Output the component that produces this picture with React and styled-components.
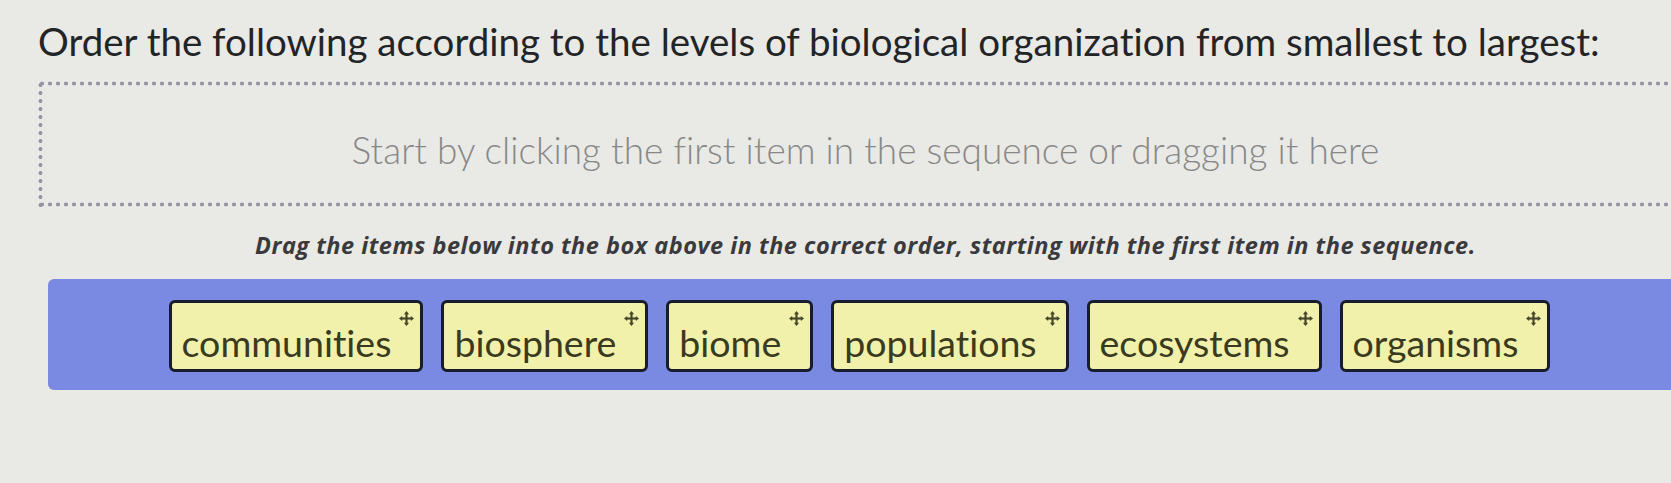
import React from 'react';
import styled, { createGlobalStyle } from 'styled-components';

const GlobalStyle = createGlobalStyle`
  html, body {
    margin: 0;
    padding: 0;
    background: #e9e9e6;
    overflow: hidden;
  }
  * {
    font-variant-ligatures: none;
  }
`;

const Page = styled.div`
  width: 1671px;
  height: 483px;
  padding: 15px 0 0 38px;
  box-sizing: border-box;
  font-family: 'Lato', 'Noto Sans', sans-serif;
  color: #262626;
`;

const Title = styled.h1`
  margin: 0;
  font-size: 38.5px;
  font-weight: 400;
  line-height: 52px;
  color: #222426;
  white-space: nowrap;
`;

const DropZone = styled.div`
  margin-top: 14px;
  margin-right: -22px;
  height: 126px;
  padding-top: 10px;
  box-sizing: border-box;
  display: flex;
  align-items: center;
  justify-content: center;
  background-image:
    radial-gradient(circle, #9494a6 1.7px, transparent 2.2px),
    radial-gradient(circle, #9494a6 1.7px, transparent 2.2px),
    radial-gradient(circle, #9494a6 1.7px, transparent 2.2px);
  background-size: 8px 5px, 8px 5px, 5px 8px;
  background-position: 0 0, 0 100%, 0 0;
  background-repeat: repeat-x, repeat-x, repeat-y;
`;

const Placeholder = styled.div`
  font-size: 37px;
  font-weight: 300;
  color: #888888;
`;

const Instruction = styled.p`
  margin: 22px -22px 0 0;
  text-align: center;
  font-family: 'Open Sans', 'Lato', sans-serif;
  font-size: 23.5px;
  letter-spacing: 0.5px;
  font-weight: 700;
  font-style: italic;
  color: #3a3a3c;
`;

const Band = styled.div`
  margin: 18px 0 0 10px;
  padding: 21px 0 18px;
  background: #7a89e2;
  border-radius: 6px 0 0 6px;
  display: flex;
  justify-content: center;
  gap: 18px;
`;

const Tile = styled.div`
  position: relative;
  height: 72px;
  box-sizing: border-box;
  padding: 12px 29px 0 10px;
  display: flex;
  align-items: center;
  background: #f1f1ab;
  border: 3px solid #191c2c;
  border-radius: 6px;
  font-size: 37.5px;
  color: #3a3a20;
`;

const MoveIcon = styled.svg`
  position: absolute;
  top: 8px;
  right: 6px;
  width: 15px;
  height: 15px;
`;

function Move() {
  return (
    <MoveIcon viewBox="0 0 14 14" fill="#45452a">
      <rect x="6" y="2" width="2" height="10" />
      <rect x="2" y="6" width="10" height="2" />
      <path d="M7 0 L9.4 3 L4.6 3 Z" />
      <path d="M7 14 L9.4 11 L4.6 11 Z" />
      <path d="M0 7 L3 4.6 L3 9.4 Z" />
      <path d="M14 7 L11 4.6 L11 9.4 Z" />
    </MoveIcon>
  );
}

const items = ['communities', 'biosphere', 'biome', 'populations', 'ecosystems', 'organisms'];

export default function App() {
  return (
    <Page>
      <GlobalStyle />
      <Title>Order the following according to the levels of biological organization from smallest to largest:</Title>
      <DropZone>
        <Placeholder>Start by clicking the first item in the sequence or dragging it here</Placeholder>
      </DropZone>
      <Instruction>
        Drag the items below into the box above in the correct order, starting with the first item in the sequence.
      </Instruction>
      <Band>
        {items.map((it) => (
          <Tile key={it}>
            {it}
            <Move />
          </Tile>
        ))}
      </Band>
    </Page>
  );
}
